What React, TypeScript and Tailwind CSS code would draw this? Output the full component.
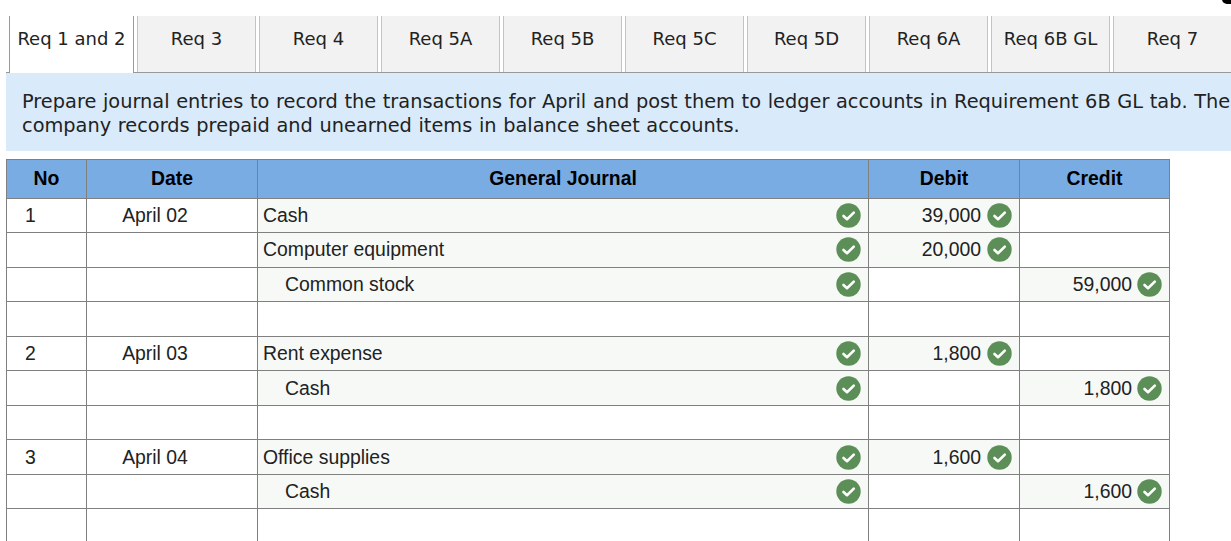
import React from 'react';

const tabs = ['Req 3', 'Req 4', 'Req 5A', 'Req 5B', 'Req 5C', 'Req 5D', 'Req 6A', 'Req 6B GL', 'Req 7'];

type Row = {
  no?: string;
  date?: string;
  account?: string;
  indent?: boolean;
  debit?: string;
  credit?: string;
  height: string;
  low?: boolean;
};

const rows: Row[] = [
  { no: '1', date: 'April 02', account: 'Cash', debit: '39,000', height: 'h-[34px]' },
  { account: 'Computer equipment', debit: '20,000', height: 'h-[35px]' },
  { account: 'Common stock', indent: true, credit: '59,000', height: 'h-[34px]' },
  { height: 'h-[35px]' },
  { no: '2', date: 'April 03', account: 'Rent expense', debit: '1,800', height: 'h-[34px]' },
  { account: 'Cash', indent: true, credit: '1,800', height: 'h-[35px]', low: true },
  { height: 'h-[34px]' },
  { no: '3', date: 'April 04', account: 'Office supplies', debit: '1,600', height: 'h-[35px]', low: true },
  { account: 'Cash', indent: true, credit: '1,600', height: 'h-[34px]' },
  { height: 'h-[35px]' },
];

const Check = () => (
  <svg width="25" height="25" viewBox="0 0 25 25" className="shrink-0">
    <circle cx="12.5" cy="12.5" r="12.2" fill="#5c8f57" />
    <path d="M7.5 13l3.5 3.2 6.8-6.6" fill="none" stroke="#fff" strokeWidth="2.6" strokeLinecap="round" strokeLinejoin="round" />
  </svg>
);

const Amount = ({ value, pad, top }: { value?: string; pad: string; top: string }) => {
  if (!value) return <td className="border border-[#808080]" />;
  return (
    <td className="border border-[#808080] bg-[#f7f9f7] p-0">
      <div className={`flex items-center justify-end ${pad} ${top}`}>
        <span>{value}</span>
        <Check />
      </div>
    </td>
  );
};

export default function App() {
  return (
    <div className="relative w-[1231px] h-[541px] overflow-hidden bg-white">
      <div className="absolute top-[-6px] right-[-6px] w-[15px] h-[10px] rounded-full bg-black" />

      {/* Tabs */}
      <div className="pt-[16px] pl-[6px] h-[73px] font-['DejaVu_Sans',sans-serif] text-[18px] text-[#222]">
        <div className="flex h-[57px] border-b border-[#999]">
          <div className="w-[3px] shrink-0" />
          <div className="w-[125px] shrink-0 h-[57px] bg-white border-x border-[#999] flex items-center justify-center pb-[12px] whitespace-nowrap">
            Req 1 and 2
          </div>
          {tabs.map((t) => (
            <div
              key={t}
              className="w-[119px] shrink-0 ml-[3px] h-[56px] bg-[#f2f2f2] border-x border-[#c4c4c4] flex items-center justify-center pb-[12px] whitespace-nowrap"
            >
              {t}
            </div>
          ))}
        </div>
      </div>

      {/* Instructions */}
      <div className="ml-[6px] h-[78px] bg-[#d9ebfa] pl-[16px] pt-[17px] font-['DejaVu_Sans',sans-serif] text-[19.35px] [word-spacing:0.5px] leading-[24px] text-[#222] whitespace-nowrap">
        Prepare journal entries to record the transactions for April and post them to ledger accounts in Requirement 6B GL tab. The
        <br />
        company records prepaid and unearned items in balance sheet accounts.
      </div>

      {/* Journal table */}
      <table className="mt-[8px] ml-[6px] w-[1164px] table-fixed border-collapse font-['Liberation_Sans',Arial,sans-serif] text-[19.4px] text-[#222]">
        <colgroup>
          <col className="w-[80px]" />
          <col className="w-[171px]" />
          <col className="w-[611px]" />
          <col className="w-[151px]" />
          <col className="w-[150px]" />
        </colgroup>
        <thead>
          <tr className="h-[39px] bg-[#7aace4] text-black">
            <th className="border border-[#808080] font-bold">No</th>
            <th className="border border-[#808080] font-bold">Date</th>
            <th className="border border-[#808080] font-bold">General Journal</th>
            <th className="border border-[#808080] font-bold">Debit</th>
            <th className="border border-[#808080] font-bold">Credit</th>
          </tr>
        </thead>
        <tbody>
          {rows.map((r, i) => {
            // these 35px rows sit a pixel lower in the reference
            const top = r.low ? 'pt-[2px]' : '';
            return (
              <tr key={i} className={r.height}>
                <td className={`border border-[#808080] text-center pr-[32px] ${top}`}>{r.no}</td>
                <td className={`border border-[#808080] text-center pr-[34px] ${top}`}>{r.date}</td>
                {r.account ? (
                  <td className="border border-[#808080] bg-[#f7f9f7] p-0">
                    <div className={`flex items-center justify-between pr-[7px] ${top}`}>
                      <span className={r.indent ? 'pl-[27px]' : 'pl-[5px]'}>{r.account}</span>
                      <Check />
                    </div>
                  </td>
                ) : (
                  <td className="border border-[#808080]" />
                )}
                <Amount value={r.debit} pad="pr-[7px] gap-[6px]" top={top} />
                <Amount value={r.credit} pad="pr-[7px] gap-[5px]" top={top} />
              </tr>
            );
          })}
          <tr className="h-[40px]">
            <td className="border border-[#808080]" />
            <td className="border border-[#808080]" />
            <td className="border border-[#808080]" />
            <td className="border border-[#808080]" />
            <td className="border border-[#808080]" />
          </tr>
        </tbody>
      </table>
    </div>
  );
}
